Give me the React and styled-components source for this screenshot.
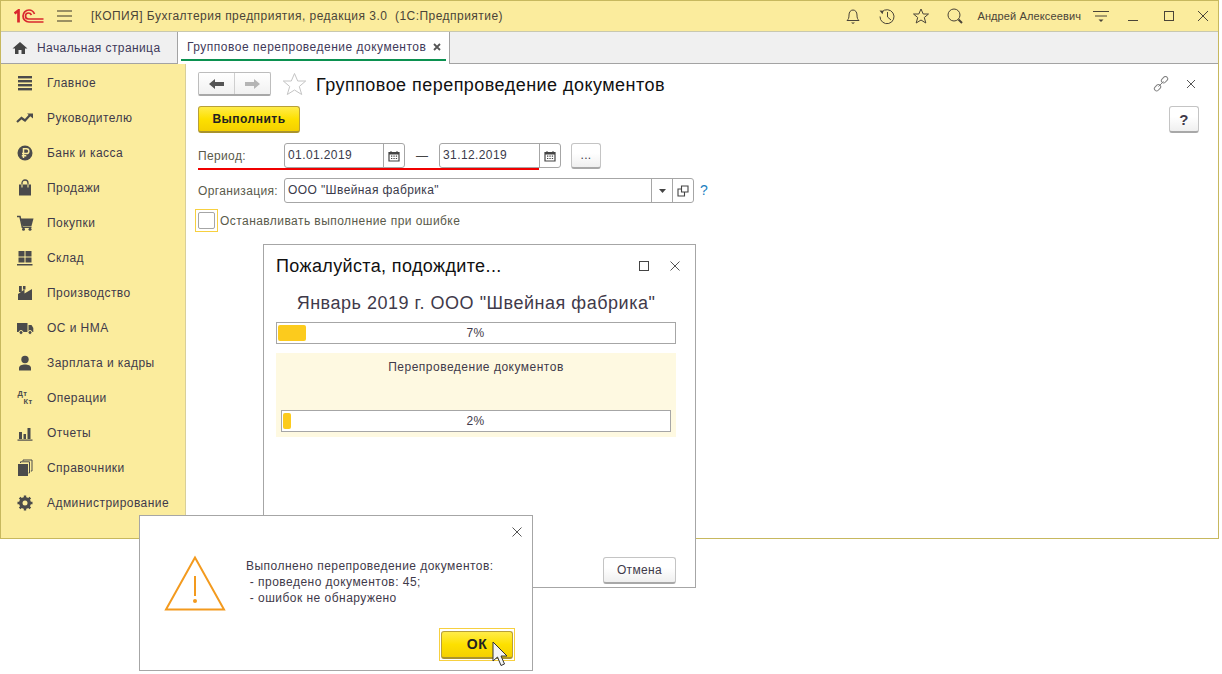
import React from 'react';
import styled, { createGlobalStyle } from 'styled-components';

const Global = createGlobalStyle`
  html, body { margin: 0; padding: 0; background: #fff; width: 1222px; height: 674px; overflow: hidden; }
  body { font-family: "Liberation Sans", Arial, sans-serif; font-size: 12px; color: #3f3a4a; }
  * { box-sizing: border-box; }
`;

const Page = styled.div`position: relative; width: 1222px; height: 674px; overflow: hidden;`;
const AppWindow = styled.div`
  position: absolute; left: 0; top: 0; width: 1219px; height: 539px;
  border: 1px solid #c7b85e; display: flex; flex-direction: column; background: #fff;
`;
const TitleBar = styled.header`
  height: 31px; flex: none; background: #fbec9d; display: flex; align-items: center;
  border-bottom: 1px solid #c8c8b0; padding-left: 13px; color: #4a4438;
`;
const Logo = styled.svg`width: 30px; height: 14px; flex: none;`;
const Burger = styled.svg`width: 15px; height: 12px; margin-left: 13px; flex: none;`;
const AppTitle = styled.div`margin-left: 19px; font-size: 12px; letter-spacing: 0.47px; white-space: pre; flex: 1;`;
const HeadIcon = styled.svg`width: 18px; height: 18px; flex: none; margin-left: ${p => p.$ml || 0}px; margin-right: ${p => p.$mr || 0}px;`;
const UserName = styled.div`margin-left: 13px; font-size: 11px; letter-spacing: 0.12px; white-space: nowrap;`;

const TabBar = styled.nav`
  height: 32px; flex: none; background: #f0f0f0; border-bottom: 1px solid #a3a3a3; display: flex;
`;
const HomeTab = styled.div`
  width: 176px; display: flex; align-items: center; padding-left: 11px; gap: 9px; letter-spacing: 0.41px; color: #3f3a5a;
`;
const ActiveTab = styled.div`
  position: relative; width: 273px; margin-bottom: -1px; background: #fff;
  border-left: 1px solid #a3a3a3; border-right: 1px solid #a3a3a3;
  display: flex; align-items: center; padding: 0 0 2px 9px; letter-spacing: 0.5px; color: #3f3a5a;
  white-space: nowrap;
  &::after { content: ""; position: absolute; left: 3px; right: 3px; bottom: 3px; height: 2px; background: #0b9150; }
`;
const TabClose = styled.svg`width: 8px; height: 8px; margin-left: 7px;`;

const Body = styled.div`flex: 1; display: flex; min-height: 0;`;
const Sidebar = styled.aside`
  width: 185px; flex: none; background: #fbec9d; border-right: 1px solid #d8cf9a; padding-top: 1.5px;
`;
const MenuItem = styled.div`
  height: 35px; display: flex; align-items: center; color: #3f3a4a; letter-spacing: 0.45px; white-space: nowrap;
`;
const MenuIcon = styled.svg`width: 18px; height: 18px; margin-left: 15px; margin-right: 13px; flex: none;`;

const Content = styled.main`flex: 1; padding: 8px 19px 0 12px; min-width: 0;`;
const HeadRow = styled.div`display: flex; align-items: center; height: 24px;`;
const NavGroup = styled.div`
  width: 73px; height: 24px; display: flex; border: 1px solid #bdbdbd; border-bottom: 2px solid #a8a8a8; border-radius: 2px;
  background: linear-gradient(#fff, #f1f1f1);
`;
const NavBtn = styled.div`
  flex: 1; display: flex; align-items: center; justify-content: center;
  & + & { border-left: 1px solid #cfcfcf; }
`;
const Star = styled.svg`width: 25px; height: 24px; margin-left: 11px; flex: none;`;
const PageTitle = styled.h1`
  margin: 2px 0 0 9px; font-size: 18px; font-weight: 400; color: #111; letter-spacing: 0.46px; flex: 1; white-space: nowrap;
`;
const SmallIcon = styled.svg`width: 16px; height: 16px; flex: none; margin-left: ${p => p.$ml || 0}px;`;

const ActionRow = styled.div`display: flex; justify-content: space-between; margin-top: 10px; height: 27px;`;
const PrimaryBtn = styled.button`
  font: 700 ${p => p.$fs || 12}px "Liberation Sans", Arial, sans-serif; color: #222; letter-spacing: 0.5px; padding: 0;
  width: ${p => p.$w}px; height: ${p => p.$h || 27}px;
  background: linear-gradient(#ffec4a 0%, #fde000 50%, #f4d000 100%);
  border: 1px solid #b8a038; border-bottom: 2px solid #a9932d; border-radius: 3px;
`;
const SecondaryBtn = styled.button`
  font: ${p => p.$bold ? '700 15px' : '400 12px'} "Liberation Sans", Arial, sans-serif; color: #3f3a4a; letter-spacing: 0.35px; padding: 0;
  width: ${p => p.$w}px; height: ${p => p.$h || 27}px; margin-left: ${p => p.$ml || 0}px;
  background: linear-gradient(#fff 40%, #efefef);
  border: 1px solid #c4c4c4; border-bottom: 2px solid #a8a8a8; border-radius: 3px;
`;
const FormRow = styled.div`
  position: relative; display: flex; align-items: center; height: 25px; margin-top: ${p => p.$mt}px;
`;
const FieldLabel = styled.label`width: 86px; flex: none; color: #5a5a4a; letter-spacing: 0.36px; white-space: nowrap;`;
const Field = styled.div`
  width: ${p => p.$w}px; height: 25px; display: flex; flex: none; background: #fff;
  border: 1px solid #a6a6a6; border-radius: 3px; color: #3a3a4a;
`;
const FieldText = styled.div`flex: 1; padding-left: 3px; line-height: 23px; letter-spacing: 0.4px; white-space: nowrap;`;
const FieldBtn = styled.div`
  width: 21px; flex: none; border-left: 1px solid #a6a6a6; display: flex; align-items: center; justify-content: center;
`;
const Dash = styled.span`width: 34px; text-align: center; flex: none; color: #444;`;
const RedLine = styled.div`position: absolute; left: 0; top: 25px; width: 341px; height: 2px; background: #f00000;`;
const Help = styled.span`color: #1d7fc0; font-size: 14px; font-weight: 400; margin: -1px 0 0 6px;`;
const CheckRow = styled.div`display: flex; align-items: center; margin: 6px 0 0 -3px; height: 23px;`;
const CheckFocus = styled.div`
  width: 23px; height: 23px; border: 1px solid #f7d040; display: flex; align-items: center; justify-content: center; flex: none;
`;
const CheckBox = styled.div`width: 17px; height: 17px; border: 1px solid #a6a6a6; border-radius: 2px;`;
const CheckLabel = styled.span`margin-left: 2px; color: #5a5a4a; letter-spacing: 0.44px; white-space: nowrap;`;

const Dialog = styled.section`
  position: absolute; left: ${p => p.$x}px; top: ${p => p.$y}px; width: ${p => p.$w}px; height: ${p => p.$h}px;
  background: #fff; border: 1px solid #a6a6a6;
`;
const WaitDialog = styled(Dialog)`padding: 11px 19px 0 12px; display: flex; flex-direction: column;`;
const DialogHead = styled.div`display: flex; align-items: center; height: 20px; margin-right: -4px;`;
const DialogTitle = styled.div`flex: 1; font-size: 18px; color: #111; letter-spacing: 0.37px; white-space: nowrap;`;
const MaxIcon = styled.svg`width: 10px; height: 10px; margin-right: 21px; flex: none;`;
const Stage = styled.div`
  margin-top: 17px; text-align: center; font-size: 18px; line-height: 21px; color: #3f3a4a; letter-spacing: 0.52px; white-space: nowrap;
`;
const Bar = styled.div`
  position: relative; height: 22px; background: #fff; border: 1px solid #a6a6a6; flex: none;
  text-align: center; line-height: 21px; letter-spacing: 0.3px; margin-top: ${p => p.$mt || 0}px;
`;
const BarFill = styled.div`
  position: absolute; left: 1px; top: 2px; bottom: 2px; background: #fccb1d; border-radius: 2px;
`;
const BarLabel = styled.span`position: relative; margin-left: -1px;`;
const SubPanel = styled.div`
  margin-top: 9px; height: 84px; background: #fef9e1; padding: 6px 5px 0; text-align: center;
`;
const SubText = styled.div`line-height: 16px; height: 16px; letter-spacing: 0.5px; color: #3f3a4a; white-space: nowrap;`;
const DialogFoot = styled.div`margin-top: 120px; display: flex; justify-content: flex-end;`;

const MsgClose = styled.div`display: flex; justify-content: flex-end; padding: 11px 10px 0 0; height: 33px;`;
const MsgBody = styled.div`display: flex; padding: 6px 0 0 24px;`;
const WarnIcon = styled.svg`width: 62px; height: 57px; flex: none;`;
const MsgText = styled.div`margin: 3px 0 0 20px; line-height: 16px; letter-spacing: 0.47px; white-space: pre; color: #3f3a4a;`;
const MsgFoot = styled.div`position: absolute; right: 17px; bottom: 9px;`;
const OkFocus = styled.div`
  width: 76px; height: 33px; border: 1px solid #f7d040; display: flex; align-items: center; justify-content: center;
`;
const Cursor = styled.svg`position: absolute; left: 492px; top: 641px; width: 18px; height: 28px;`;

const c = '#4b4b4b';
const bg = '#fbec9d';
const ic = {
  main: <g fill={c}><rect x="2" y="2" width="14" height="2.4"/><rect x="2" y="6" width="14" height="2.4"/><rect x="2" y="10" width="14" height="2.4"/><rect x="2" y="14" width="14" height="2.4"/></g>,
  trend: <g><path d="M1 13l4.5-4 3.5 2.5L14 6" fill="none" stroke={c} strokeWidth="2.2"/><path d="M11 4.5h6v5z" fill={c}/></g>,
  bank: <g><circle cx="9" cy="9" r="7.5" fill={c}/><path d="M7.5 14V4.8h3a2.3 2.3 0 010 4.7h-4.500M5.800 11.800h4.500" fill="none" stroke={bg} strokeWidth="1.500"/></g>,
  sale: <g><rect x="3" y="5.500" width="12" height="11" fill={c}/><path d="M6 5.500V4a3 3 0 016 0v1.500" fill="none" stroke={c} strokeWidth="1.300"/><path d="M6 5.500V8.500M12 5.500V8.500" stroke={bg} strokeWidth="1.100"/></g>,
  cart: <g fill={c}><path d="M4.500 4.500H17.500L15.500 12H6.500z"/><path d="M1 2.500H4L6.300 13.200H15.500" fill="none" stroke={c} strokeWidth="1.500"/><circle cx="7.500" cy="15.200" r="1.500"/><circle cx="14" cy="15.200" r="1.500"/></g>,
  store: <g fill={c}><rect x="2.500" y="2" width="6" height="5.500"/><rect x="9.500" y="2" width="6" height="5.500"/><rect x="2.500" y="8.500" width="6" height="5"/><rect x="9.500" y="8.500" width="6" height="5"/><rect x="1" y="15" width="15.500" height="1.500"/></g>,
  prod: <g fill={c}><rect x="3" y="2" width="2.800" height="6"/><rect x="7" y="2" width="2.500" height="3.500"/><path d="M2 16V10L8.500 5.500V9.500L16 5V16z"/></g>,
  truck: <g fill={c}><rect x="1" y="4" width="10.500" height="9"/><path d="M12.500 6h3l1.800 3v4h-4.800z"/><circle cx="5" cy="13.500" r="2" stroke={bg}/><circle cx="14" cy="13.500" r="2" stroke={bg}/></g>,
  user: <g fill={c}><circle cx="9" cy="5.500" r="3.700"/><path d="M3 16.500v-2.500c0-2.500 3-3.500 6-3.500s6 1 6 3.500v2.500z"/></g>,
  rep: <g fill={c}><rect x="3" y="8" width="3" height="7"/><rect x="7.500" y="10" width="2.500" height="5"/><rect x="11.500" y="4" width="3" height="11"/><rect x="1.500" y="15.500" width="15" height="1.200"/></g>,
  ref: <g><rect x="2" y="5" width="10" height="12" fill={c}/><path d="M4.500 4V2.800h9V14h-1M7 2V1h9v11h-1.200" fill="none" stroke={c} strokeWidth="1"/></g>,
  gear: <g><circle cx="9" cy="9" r="4.500" fill="none" stroke={c} strokeWidth="3"/><path d="M9 1.500v15M1.500 9h15M3.700 3.700l10.600 10.600M14.300 3.700L3.700 14.300" stroke={c} strokeWidth="2.400"/><circle cx="9" cy="9" r="2.500" fill={bg}/></g>,
};
const menu = [
  ['Главное', ic.main], ['Руководителю', ic.trend], ['Банк и касса', ic.bank], ['Продажи', ic.sale],
  ['Покупки', ic.cart], ['Склад', ic.store], ['Производство', ic.prod], ['ОС и НМА', ic.truck],
  ['Зарплата и кадры', ic.user],
  ['Операции', <g fill={c} fontFamily="Liberation Sans" fontWeight="700" fontSize="7.500"><text x="1.500" y="7">Дт</text><text x="7.500" y="14.500">Кт</text></g>],
  ['Отчеты', ic.rep], ['Справочники', ic.ref], ['Администрирование', ic.gear],
];

const X = ({ size = 10, color = '#555', w = 1 }) => (
  <svg width={size} height={size} viewBox="0 0 10 10"><path d="M.5.500l9 9M9.500.500l-9 9" stroke={color} strokeWidth={w} fill="none"/></svg>
);
const Calendar = () => (
  <svg width="12" height="12" viewBox="0 0 12 12"><path d="M1 2.500h10v8.500H1z" fill="none" stroke="#444" strokeWidth="1.200"/><rect x="1" y="2" width="10" height="2.500" fill="#444"/><path d="M3 1v2M9 1v2" stroke="#444" strokeWidth="1"/><path d="M3 6.200h1.300M5.400 6.200h1.300M7.800 6.200h1.300M3 8.500h1.300M5.400 8.500h1.300M7.800 8.500h1.300" stroke="#444" strokeWidth="1.200"/></svg>
);

export default function App() {
  return (
    <Page>
      <Global />
      <AppWindow>
        <TitleBar>
          <Logo viewBox="0 0 30 14">
            <g fill="none" stroke="#d9272e" strokeWidth="1.700">
              <path d="M.5 4.500l4-3V13.500" strokeWidth="2.700"/>
              <path d="M20.500 5C19.500 2.500 17.500 1 15 1 11.500 1 9 3.800 9 7s2.500 6 6 6h14.500"/>
              <path d="M17.500 6c-.5-1-1.500-2-3-2C12.700 4 11.500 5.300 11.500 7s1.200 3 3 3h15"/>
            </g>
          </Logo>
          <Burger viewBox="0 0 15 12"><path d="M0 1h15M0 6h15M0 11h15" stroke="#3a3428" strokeWidth="1"/></Burger>
          <AppTitle>{'[КОПИЯ] Бухгалтерия предприятия, редакция 3.0  (1С:Предприятие)'}</AppTitle>
          <HeadIcon viewBox="0 0 18 18"><path d="M3 13.500c1.500-1.500 2-2.500 2-5.500 0-2.800 1.600-5 4-5s4 2.200 4 5c0 3 .5 4 2 5.500z" fill="none" stroke="#4a4438"/><path d="M7 15.500h4l-2 1.500z" fill="#4a4438"/></HeadIcon>
          <HeadIcon viewBox="0 0 18 18" $ml={16}><path d="M3.800 5A7 7 0 112 9.500" fill="none" stroke="#4a4438"/><path d="M1.500 3.500l4 .2-1 3.500z" fill="#4a4438"/><path d="M9.500 5v5l3.500 3" fill="none" stroke="#4a4438"/></HeadIcon>
          <HeadIcon viewBox="0 0 18 18" $ml={16}><path d="M9 2l2.200 5h5.300l-4.200 3.500 1.500 5.500L9 13l-4.800 3 1.500-5.500L1.500 7h5.300z" fill="none" stroke="#4a4438"/></HeadIcon>
          <HeadIcon viewBox="0 0 18 18" $ml={16}><circle cx="8" cy="8" r="6" fill="none" stroke="#4a4438"/><path d="M12.500 12.500l3.500 3.500" stroke="#4a4438" strokeWidth="2"/></HeadIcon>
          <UserName>Андрей Алексеевич</UserName>
          <HeadIcon viewBox="0 0 18 18" $ml={11}><path d="M1 4.500h16M3 9h12" stroke="#4a4438"/><path d="M6.500 12.500h5L9 15z" fill="#4a4438"/></HeadIcon>
          <HeadIcon viewBox="0 0 18 18" $ml={16}><path d="M2 13.500h10" stroke="#4a4438"/></HeadIcon>
          <HeadIcon viewBox="0 0 18 18" $ml={16}><rect x="4.500" y="4.500" width="9" height="9" fill="none" stroke="#4a4438"/></HeadIcon>
          <HeadIcon viewBox="0 0 18 18" $ml={16} $mr={6}><path d="M4 4l10 10M14 4L4 14" stroke="#4a4438"/></HeadIcon>
        </TitleBar>
        <TabBar>
          <HomeTab>
            <svg width="16" height="14" viewBox="0 0 16 14"><path d="M8 1L0.500 7.500H3V13h3.500V9h3v4H13V7.500h2.500z" fill="#444"/></svg>
            Начальная страница
          </HomeTab>
          <ActiveTab>
            Групповое перепроведение документов
            <TabClose viewBox="0 0 8 8"><path d="M1 1l6 6M7 1L1 7" stroke="#555" strokeWidth="1.800"/></TabClose>
          </ActiveTab>
        </TabBar>
        <Body>
          <Sidebar>
            {menu.map(([t, i]) => (
              <MenuItem key={t}><MenuIcon viewBox="0 0 18 18">{i}</MenuIcon>{t}</MenuItem>
            ))}
          </Sidebar>
          <Content>
            <HeadRow>
              <NavGroup>
                <NavBtn><svg width="15" height="10" viewBox="0 0 15 10"><path d="M0 5l6-5v3h9v4H6v3z" fill="#555"/></svg></NavBtn>
                <NavBtn><svg width="15" height="10" viewBox="0 0 15 10"><path d="M15 5L9 0v3H0v4h9v3z" fill="#b5b5b5"/></svg></NavBtn>
              </NavGroup>
              <Star viewBox="0 0 25 24"><path d="M12.500 1.500l3.200 7.500h8l-6.400 5.500 2.400 8-7.200-4.500-7.200 4.500 2.400-8L1.300 9h8z" fill="#fff" stroke="#c4c4c4"/></Star>
              <PageTitle>Групповое перепроведение документов</PageTitle>
              <SmallIcon viewBox="0 0 16 16"><g fill="none" stroke="#808080"><rect x="8" y="1.500" width="7" height="4.500" rx="2.200" transform="rotate(-45 11.500 3.700)"/><rect x="1" y="9.500" width="7" height="4.500" rx="2.200" transform="rotate(-45 4.500 11.700)"/><path d="M5.500 10.500l5-5"/></g></SmallIcon>
              <SmallIcon viewBox="0 0 16 16" $ml={14}><path d="M4 4l8 8M12 4l-8 8" stroke="#555"/></SmallIcon>
            </HeadRow>
            <ActionRow>
              <PrimaryBtn $w={102}>Выполнить</PrimaryBtn>
              <SecondaryBtn $w={30} $bold>?</SecondaryBtn>
            </ActionRow>
            <FormRow $mt={10}>
              <FieldLabel>Период:</FieldLabel>
              <Field $w={121}><FieldText>01.01.2019</FieldText><FieldBtn><Calendar /></FieldBtn></Field>
              <Dash>—</Dash>
              <Field $w={122}><FieldText>31.12.2019</FieldText><FieldBtn><Calendar /></FieldBtn></Field>
              <SecondaryBtn $w={30} $h={26} $ml={10}>...</SecondaryBtn>
              <RedLine />
            </FormRow>
            <FormRow $mt={10}>
              <FieldLabel>Организация:</FieldLabel>
              <Field $w={410}>
                <FieldText>ООО "Швейная фабрика"</FieldText>
                <FieldBtn><svg width="7" height="4" viewBox="0 0 7 4"><path d="M0 0h7L3.500 4z" fill="#444"/></svg></FieldBtn>
                <FieldBtn><svg width="12" height="12" viewBox="0 0 12 12"><g fill="none" stroke="#444" strokeWidth="1.100"><path d="M4.500 1h6.500v6H4.500z"/><path d="M4.500 4H1v7h6.500V7"/></g></svg></FieldBtn>
              </Field>
              <Help>?</Help>
            </FormRow>
            <CheckRow>
              <CheckFocus><CheckBox /></CheckFocus>
              <CheckLabel>Останавливать выполнение при ошибке</CheckLabel>
            </CheckRow>
          </Content>
        </Body>
      </AppWindow>

      <WaitDialog $x={263} $y={244} $w={433} $h={344}>
        <DialogHead>
          <DialogTitle>Пожалуйста, подождите...</DialogTitle>
          <MaxIcon viewBox="0 0 10 10"><rect x=".5" y=".5" width="9" height="9" fill="none" stroke="#444"/></MaxIcon>
          <X />
        </DialogHead>
        <Stage>Январь 2019 г. ООО "Швейная фабрика"</Stage>
        <Bar $mt={8}><BarFill style={{ width: 28 }} /><BarLabel>7%</BarLabel></Bar>
        <SubPanel>
          <SubText>Перепроведение документов</SubText>
          <Bar $mt={35}><BarFill style={{ width: 8 }} /><BarLabel>2%</BarLabel></Bar>
        </SubPanel>
        <DialogFoot><SecondaryBtn $w={73}>Отмена</SecondaryBtn></DialogFoot>
      </WaitDialog>

      <Dialog $x={139} $y={515} $w={394} $h={156}>
        <MsgClose><X /></MsgClose>
        <MsgBody>
          <WarnIcon viewBox="0 0 62 57"><path d="M31 2.500L2 54.500h58z" fill="none" stroke="#f39a1e" strokeWidth="2"/><rect x="30" y="21" width="2" height="20" fill="#f39a1e"/><circle cx="31" cy="46" r="2" fill="#f39a1e"/></WarnIcon>
          <MsgText>{'Выполнено перепроведение документов:\n - проведено документов: 45;\n - ошибок не обнаружено'}</MsgText>
        </MsgBody>
        <MsgFoot>
          <OkFocus><PrimaryBtn $w={72} $h={28} $fs={14}>ОК</PrimaryBtn></OkFocus>
        </MsgFoot>
      </Dialog>
      <Cursor viewBox="0 0 18 28"><path d="M1 1v19l4.500-4 3.500 8.500 3.500-1.500-3.500-8h6z" fill="#f4f4f4" stroke="#333" strokeWidth="1"/></Cursor>
    </Page>
  );
}
